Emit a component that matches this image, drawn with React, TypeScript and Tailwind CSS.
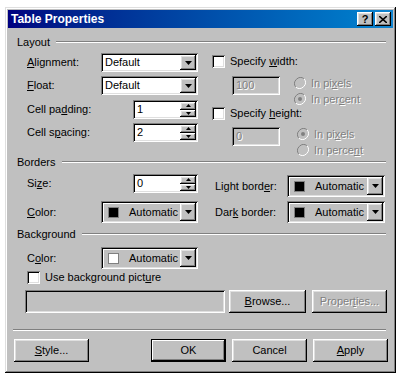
import React from "react"

const raised =
  "shadow-[inset_-1px_-1px_#000,inset_1px_1px_#fff,inset_-2px_-2px_#808080,inset_2px_2px_#dfdfdf]"
const sunken =
  "shadow-[inset_1px_1px_#808080,inset_-1px_-1px_#fff,inset_2px_2px_#000,inset_-2px_-2px_#dfdfdf]"
const disabledText = "text-[#808080] [text-shadow:1px_1px_0_#fff]"

function DownArrow() {
  return (
    <svg width="7" height="4" viewBox="0 0 7 4">
      <polygon points="0,0 7,0 3.5,4" fill="#000" />
    </svg>
  )
}

function Combo({ value, w = "w-[97px]" }: { value: string; w?: string }) {
  return (
    <div className={`${w} h-[19px] bg-white ${sunken} flex items-center p-[2px]`}>
      <span className="flex-1 pl-[2px] leading-none">{value}</span>
      <div className={`w-[16px] h-full bg-[#c0c0c0] ${raised} flex items-center justify-center`}>
        <DownArrow />
      </div>
    </div>
  )
}

function ColorCombo({ swatch, w = "w-[97px]" }: { swatch: string; w?: string }) {
  return (
    <div className={`${w} h-[22px] bg-[#c0c0c0] ${sunken} flex items-center p-[2px]`}>
      <div className="flex-1 h-full flex items-center shadow-[inset_1px_1px_#fff]">
        <div className={`ml-[5px] w-[11px] h-[11px] border border-[#808080] ${swatch} shrink-0`} />
        <span className="ml-[10px] leading-none whitespace-nowrap">Automatic</span>
      </div>
      <div className={`w-[16px] h-full bg-[#c0c0c0] ${raised} flex items-center justify-center shrink-0`}>
        <DownArrow />
      </div>
    </div>
  )
}

function Spin({ value }: { value: string }) {
  return (
    <div className={`w-[65px] h-[19px] bg-white ${sunken} flex items-stretch p-[2px]`}>
      <span className="flex-1 pl-[2px] leading-none flex items-center">{value}</span>
      <div className="w-[16px] flex flex-col">
        <div className={`flex-1 bg-[#c0c0c0] ${raised} flex items-center justify-center`}>
          <svg width="5" height="3" viewBox="0 0 5 3">
            <polygon points="2.5,0 5,3 0,3" fill="#000" />
          </svg>
        </div>
        <div className={`flex-1 bg-[#c0c0c0] ${raised} flex items-center justify-center`}>
          <svg width="5" height="3" viewBox="0 0 5 3">
            <polygon points="0,0 5,0 2.5,3" fill="#000" />
          </svg>
        </div>
      </div>
    </div>
  )
}

function Checkbox() {
  return <div className={`w-[13px] h-[13px] bg-white ${sunken} shrink-0`} />
}

function Radio({ checked }: { checked?: boolean }) {
  return (
    <svg width="12" height="12" viewBox="0 0 12 12" className="shrink-0">
      <circle cx="6" cy="6" r="5.5" fill="#c0c0c0" />
      <path d="M10.2 1.8 A6 6 0 0 0 1.8 10.2" stroke="#808080" strokeWidth="1" fill="none" />
      <path d="M1.8 10.2 A6 6 0 0 0 10.2 1.8" stroke="#fff" strokeWidth="1" fill="none" />
      {checked && <circle cx="6" cy="6" r="2" fill="#808080" />}
    </svg>
  )
}

function RadioRow({ label, checked }: { label: React.ReactNode; checked?: boolean }) {
  return (
    <div className="flex items-center gap-[5px] h-[12px]">
      <Radio checked={checked} />
      <span className={`${disabledText} leading-none`}>{label}</span>
    </div>
  )
}

function SectionHeader({ title }: { title: string }) {
  return (
    <div className="flex items-center h-[14px] pl-[12px] pr-[10px]">
      <span className="leading-none">{title}</span>
      <div className="flex-1 ml-[6px] h-[2px] border-t border-[#808080] border-b border-b-white" />
    </div>
  )
}

function Button({
  children,
  w = "w-[75px]",
  def,
  disabled,
}: {
  children: React.ReactNode
  w?: string
  def?: boolean
  disabled?: boolean
}) {
  return (
    <div
      className={`${w} h-[23px] bg-[#c0c0c0] flex items-center justify-center ${
        def
          ? "shadow-[inset_-1px_-1px_#000,inset_1px_1px_#000,inset_-2px_-2px_#000,inset_2px_2px_#fff,inset_-3px_-3px_#808080]"
          : raised
      } ${disabled ? disabledText : ""}`}
    >
      {children}
    </div>
  )
}

export default function App() {
  return (
    <div className="w-[403px] h-[382px] bg-white pt-[7px] pl-[5px] font-['Liberation_Sans',Arial,sans-serif] text-[11px] text-black">
      <div
        className={`w-[391px] h-[366px] bg-[#c0c0c0] flex flex-col shadow-[inset_-1px_-1px_#000,inset_1px_1px_#dfdfdf,inset_-2px_-2px_#808080,inset_2px_2px_#fff]`}
      >
        {/* Title bar */}
        <div className="mx-[3px] mt-[3px] h-[18px] bg-gradient-to-r from-[#000080] to-[#1084d0] flex items-center pl-[3px] pr-[2px]">
          <span className="flex-1 text-white font-bold text-[12px] leading-none">Table Properties</span>
          <div className={`w-[16px] h-[14px] bg-[#c0c0c0] ${raised} flex items-center justify-center font-bold text-[11px] leading-none`}>
            ?
          </div>
          <div className={`ml-[2px] w-[16px] h-[14px] bg-[#c0c0c0] ${raised} flex items-center justify-center`}>
            <svg width="8" height="7" viewBox="0 0 8 7">
              <path d="M0 0 L8 7 M8 0 L0 7" stroke="#000" strokeWidth="1.6" />
            </svg>
          </div>
        </div>

        {/* Layout */}
        <div className="mt-[7px]">
          <SectionHeader title="Layout" />
        </div>
        <div className="h-[106px] flex">
          <div className="pl-[22px] w-[193px] flex flex-col">
            <div className="mt-[4px] flex items-center justify-between h-[19px]">
              <span>
                <u>A</u>lignment:
              </span>
              <Combo value="Default" />
            </div>
            <div className="mt-[4px] flex items-center justify-between h-[19px]">
              <span>
                <u>F</u>loat:
              </span>
              <Combo value="Default" />
            </div>
            <div className="mt-[5px] flex items-center justify-between h-[19px]">
              <span>
                Cell pa<u>d</u>ding:
              </span>
              <Spin value="1" />
            </div>
            <div className="mt-[4px] flex items-center justify-between h-[19px]">
              <span>
                Cell s<u>p</u>acing:
              </span>
              <Spin value="2" />
            </div>
          </div>
          <div className="pl-[14px] flex flex-col">
            <div className="mt-[6px] flex items-center gap-[5px] h-[13px]">
              <Checkbox />
              <span>
                Specify <u>w</u>idth:
              </span>
            </div>
            <div className="mt-[8px] pl-[20px] flex items-start">
              <div className={`w-[48px] h-[19px] ${sunken} flex items-center pl-[4px] ${disabledText}`}>100</div>
              <div className="ml-[14px] mt-[1px] flex flex-col gap-[4px]">
                <RadioRow label={<>In pi<u>x</u>els</>} />
                <RadioRow label={<>In per<u>c</u>ent</>} checked />
              </div>
            </div>
            <div className="mt-[2px] flex items-center gap-[5px] h-[13px]">
              <Checkbox />
              <span>
                Specify <u>h</u>eight:
              </span>
            </div>
            <div className="mt-[7px] pl-[20px] flex items-start">
              <div className={`w-[48px] h-[19px] ${sunken} flex items-center pl-[4px] ${disabledText}`}>0</div>
              <div className="ml-[17px] mt-[1px] flex flex-col gap-[4px]">
                <RadioRow label={<>In pi<u>x</u>els</>} checked />
                <RadioRow label={<>In perce<u>n</u>t</>} />
              </div>
            </div>
          </div>
        </div>

        {/* Borders */}
        <SectionHeader title="Borders" />
        <div className="mt-[5px] flex items-start">
          <div className="pl-[22px] w-[193px] flex items-center justify-between h-[19px]">
            <span>
              Si<u>z</u>e:
            </span>
            <Spin value="0" />
          </div>
          <div className="ml-[17px] mt-[1px] w-[170px] flex items-center justify-between h-[22px]">
            <span>
              Light bord<u>e</u>r:
            </span>
            <ColorCombo swatch="bg-black" w="w-[98px]" />
          </div>
        </div>
        <div className="mt-[4px] flex items-start">
          <div className="pl-[22px] w-[193px] flex items-center justify-between h-[22px]">
            <span>
              <u>C</u>olor:
            </span>
            <ColorCombo swatch="bg-black" />
          </div>
          <div className="ml-[17px] w-[170px] flex items-center justify-between h-[22px]">
            <span>
              Dar<u>k</u> border:
            </span>
            <ColorCombo swatch="bg-black" w="w-[98px]" />
          </div>
        </div>

        {/* Background */}
        <div className="mt-[4px]">
          <SectionHeader title="Background" />
        </div>
        <div className="mt-[6px] pl-[22px] w-[193px] flex items-center justify-between h-[22px]">
          <span>
            C<u>o</u>lor:
          </span>
          <ColorCombo swatch="bg-white" />
        </div>
        <div className="mt-[2px] pl-[22px] flex items-center gap-[5px] h-[13px]">
          <Checkbox />
          <span>
            Use background pict<u>u</u>re
          </span>
        </div>
        <div className="mt-[6px] pl-[20px] flex items-center h-[23px]">
          <div className={`w-[200px] h-[23px] ${sunken}`} />
          <div className="ml-[4px]">
            <Button w="w-[77px]">
              <span>
                <u>B</u>rowse...
              </span>
            </Button>
          </div>
          <div className="ml-[6px]">
            <Button disabled>
              <span>
                Proper<u>t</u>ies...
              </span>
            </Button>
          </div>
        </div>

        {/* Footer */}
        <div className="mt-[16px] ml-[8px] mr-[10px] h-[2px] border-t border-[#808080] border-b border-b-white" />
        <div className="mt-[8px] pl-[9px] flex items-center">
          <Button>
            <span>
              <u>S</u>tyle...
            </span>
          </Button>
          <div className="ml-[62px]">
            <Button def>OK</Button>
          </div>
          <div className="ml-[6px]">
            <Button>Cancel</Button>
          </div>
          <div className="ml-[6px]">
            <Button>
              <span>
                <u>A</u>pply
              </span>
            </Button>
          </div>
        </div>
      </div>
    </div>
  )
}
